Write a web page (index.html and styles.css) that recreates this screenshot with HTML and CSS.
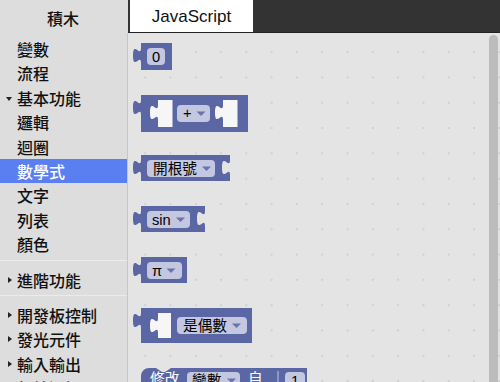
FILE: index.html
```html
<!DOCTYPE html>
<html lang="zh-Hant">
<head>
<meta charset="utf-8">
<title>積木</title>
<link rel="stylesheet" href="styles.css">
</head>
<body>
<div class="app">
  <div class="side-head">積木</div>
  <div class="topbar"><div class="tab">JavaScript</div></div>

  <nav class="menu">
    <div class="item"><span class="tri"></span>變數</div>
    <div class="item"><span class="tri"></span>流程</div>
    <div class="item"><span class="tri"><i class="down"></i></span>基本功能</div>
    <div class="item"><span class="tri"></span>邏輯</div>
    <div class="item"><span class="tri"></span>迴圈</div>
    <div class="item sel"><span class="tri"></span>數學式</div>
    <div class="item"><span class="tri"></span>文字</div>
    <div class="item"><span class="tri"></span>列表</div>
    <div class="item"><span class="tri"></span>顏色</div>
    <div class="sep"></div>
    <div class="item"><span class="tri"><i class="right"></i></span>進階功能</div>
    <div class="sep"></div>
    <div class="item"><span class="tri"><i class="right"></i></span>開發板控制</div>
    <div class="item"><span class="tri"><i class="right"></i></span>發光元件</div>
    <div class="item"><span class="tri"><i class="right"></i></span>輸入輸出</div>
    <div class="item"><span class="tri"><i class="right"></i></span>無線通訊</div>
  </nav>

  <main class="flyout">
    <div class="blocks">
      <svg class="blk" width="40" height="27" viewBox="0 0 40 27">
        <path class="body" d="M8,0H39V27H8V20c0,-10 -8,8 -8,-7.5s8,2.5 8,-7.5Z"/>
        <rect class="fld" x="14" y="5" width="18" height="17" rx="4"/>
        <text class="ft" x="23" y="19" text-anchor="middle">0</text>
      </svg>

      <svg class="blk" width="116" height="37" viewBox="0 0 116 37">
        <path class="body" d="M8,0H115V37H8V20c0,-10 -8,8 -8,-7.5s8,2.5 8,-7.5Z"/>
        <path class="hole" d="M25,5v5c0,10 -8,-8 -8,7.5s8,-2.5 8,7.5V32H39.5V5Z"/>
        <rect class="fld" x="44" y="10" width="33" height="17" rx="4"/>
        <text class="ft" x="50" y="23">+</text>
        <path class="arr" d="M63.5,16.5h9l-4.5,4.5z"/>
        <path class="hole" d="M90,5v5c0,10 -8,-8 -8,7.5s8,-2.5 8,7.5V32H104.5V5Z"/>
      </svg>

      <svg class="blk tight" width="98" height="26" viewBox="0 0 98 26">
        <path class="body" d="M8,0H97V5c0,10 -8,-8 -8,7.5s8,-2.5 8,7.5V26H8V20c0,-10 -8,8 -8,-7.5s8,2.5 8,-7.5Z"/>
        <rect class="fld" x="14" y="5" width="68" height="17" rx="4"/>
        <text class="ft" x="20" y="19">開根號</text>
        <path class="arr" d="M69,11.5h9l-4.5,4.5z"/>
      </svg>

      <svg class="blk" width="73" height="26" viewBox="0 0 73 26">
        <path class="body" d="M8,0H72V5c0,10 -8,-8 -8,7.5s8,-2.5 8,7.5V26H8V20c0,-10 -8,8 -8,-7.5s8,2.5 8,-7.5Z"/>
        <rect class="fld" x="14" y="5" width="43" height="17" rx="4"/>
        <text class="ft" x="19" y="19">sin</text>
        <path class="arr" d="M43,11.5h9l-4.5,4.5z"/>
      </svg>

      <svg class="blk" width="55" height="26" viewBox="0 0 55 26">
        <path class="body" d="M8,0H54V26H8V20c0,-10 -8,8 -8,-7.5s8,2.5 8,-7.5Z"/>
        <rect class="fld" x="14" y="5" width="35" height="17" rx="4"/>
        <text class="ft" x="19" y="19">π</text>
        <path class="arr" d="M33.5,11.5h9l-4.5,4.5z"/>
      </svg>

      <svg class="blk" width="120" height="35" viewBox="0 0 120 35">
        <path class="body" d="M8,0H119V35H8V20c0,-10 -8,8 -8,-7.5s8,2.5 8,-7.5Z"/>
        <path class="hole" d="M25,5v5c0,10 -8,-8 -8,7.5s8,-2.5 8,7.5V30H38V5Z"/>
        <rect class="fld" x="44" y="9" width="70" height="17" rx="4"/>
        <text class="ft" x="50" y="23">是偶數</text>
        <path class="arr" d="M99,15.5h9l-4.5,4.5z"/>
      </svg>

      <svg class="blk" width="180" height="40" viewBox="0 0 180 40">
        <path class="body" d="M8,8a8,8 0 0 1 8,-8H23l6,4 3,0 6,-4H174V40H8Z"/>
        <text class="ft white" x="17" y="16">修改</text>
        <rect class="fld" x="54" y="4" width="53" height="17" rx="4"/>
        <text class="ft" x="59" y="18">變數</text>
        <path class="arr" d="M94,10.5h9l-4.5,4.5z"/>
        <text class="ft white" x="115" y="16">自</text>
        <rect class="seam" x="144" y="3" width="2" height="37"/>
        <rect class="fld" x="152" y="4" width="20" height="17" rx="4"/>
        <text class="ft" x="162" y="18" text-anchor="middle">1</text>
      </svg>
    </div>
    <div class="scrollbar"></div>
  </main>
</div>
</body>
</html>
```

FILE: styles.css
```css
* { box-sizing: border-box; }

html, body {
  margin: 0;
  padding: 0;
}

body {
  width: 500px;
  height: 382px;
  overflow: hidden;
  background: #dddddd;
  font-family: "Noto Sans CJK TC", "Liberation Sans", sans-serif;
  color: #111;
}

.app {
  display: grid;
  grid-template-columns: 128px 372px;
  grid-template-rows: 33px 349px;
  height: 382px;
}

.side-head {
  background: #dddddd;
  font-size: 16px;
  font-weight: 500;
  line-height: 31px;
  padding: 3px 2px 0 0;
  text-align: center;
  color: #111;
}

.topbar {
  background: #333333;
  border-bottom: 1px solid #222;
  padding-left: 2px;
  display: flex;
}

.tab {
  width: 123px;
  height: 32px;
  background: #ffffff;
  font-family: "Liberation Sans", sans-serif;
  font-size: 17px;
  line-height: 34px;
  text-align: center;
  color: #111;
}

.menu {
  background: #dddddd;
  border-right: 1px solid #c6c6c6;
  padding-top: 4px;
  overflow: hidden;
}

.item {
  height: 24.4px;
  line-height: 24.4px;
  font-size: 16px;
  font-weight: 500;
  padding-left: 5px;
  display: flex;
  align-items: center;
  white-space: nowrap;
  color: #111;
}

.item.sel {
  background: #5a7ff0;
  color: #fff;
}

.tri {
  width: 12px;
  height: 24px;
  display: flex;
  align-items: center;
  flex-shrink: 0;
}

.down {
  display: block;
  width: 0;
  height: 0;
  margin-left: 1px;
  margin-top: 3px;
  border-left: 3px solid transparent;
  border-right: 3px solid transparent;
  border-top: 4px solid #222;
}

.right {
  display: block;
  width: 0;
  height: 0;
  margin-left: 3px;
  border-top: 3px solid transparent;
  border-bottom: 3px solid transparent;
  border-left: 4px solid #222;
}

.sep {
  height: 1px;
  background: #ebebeb;
  margin: 3.5px 0 6.5px;
}

.flyout {
  display: flex;
  overflow: hidden;
  background-color: #e4e4e4;
  background-image: radial-gradient(circle at center, #d0d0d0 0, #d0d0d0 0.7px, rgba(208,208,208,0) 1.2px);
  background-size: 25.3px 25.3px;
  background-position: 4.5px 6.5px;
}

.blocks {
  flex: 1;
  display: flex;
  flex-direction: column;
  align-items: flex-start;
  gap: 25px;
  padding: 10px 0 0 5px;
}

.blk {
  display: block;
  flex-shrink: 0;
}

.blk.tight {
  margin-top: -2px;
}

.body { fill: #5b67a5; }
.hole { fill: #f6f6f6; }
.fld { fill: #c3c7df; }
.arr { fill: #6874b2; }
.seam { fill: #8d96c6; }

.ft {
  font-family: "Liberation Sans", "Noto Sans CJK TC", sans-serif;
  font-size: 14.67px;
  fill: #000;
}

.ft.white { fill: #fff; }

.scrollbar {
  width: 9px;
  margin: 2px 2px 0 0;
  background: #bcbcbc;
  border-radius: 4.5px 4.5px 0 0;
  flex-shrink: 0;
}
```
